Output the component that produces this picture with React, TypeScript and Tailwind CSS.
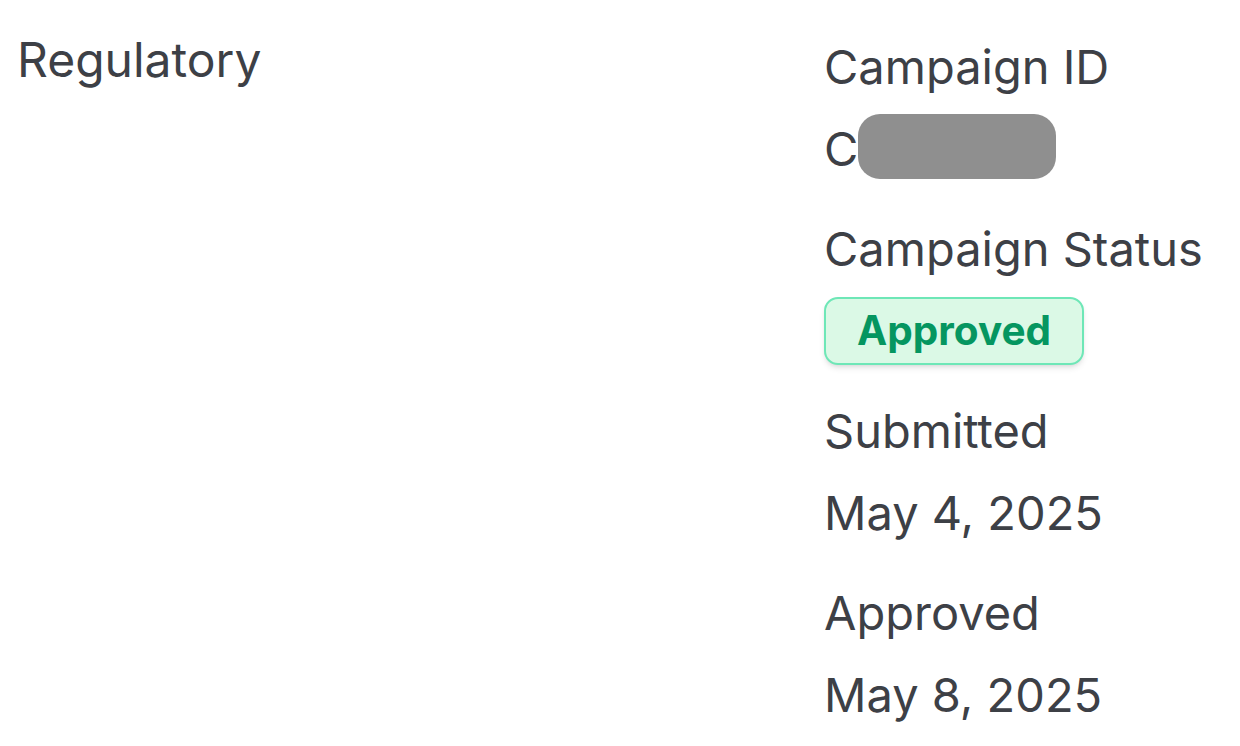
import React from "react";

const Field = ({ label, children }: { label: string; children: React.ReactNode }) => (
  <div className="flex flex-col">
    <div className="leading-[82px]">{label}</div>
    <div className="leading-[82px]">{children}</div>
  </div>
);

const App = () => {
  return (
    <div
      className="w-[1240px] h-[746px] bg-white text-[#3d4046] text-[47px] overflow-hidden"
      style={{ fontFamily: "Inter, 'Noto Sans', sans-serif" }}
    >
      <div className="grid grid-cols-[807px_1fr] pl-[17px]">
        <div className="leading-[82px] pt-[19px] text-[48px]">Regulatory</div>
        <div className="flex flex-col gap-[18px] pt-[26px]">
          <Field label="Campaign ID">
            <div className="flex items-center h-[82px]">
              <span>C</span>
              <span className="inline-block w-[198px] h-[65px] mb-[6px] rounded-[22px] bg-[#8f8f8f]" />
            </div>
          </Field>
          <div className="flex flex-col">
            <div className="leading-[82px]">Campaign Status</div>
            <div className="h-[82px] flex items-center">
              <span className="inline-block rounded-[14px] border-2 border-[#6ee7b7] bg-[#dbf9e6] px-[31px] text-[40.5px] leading-[64px] font-bold text-[#059660] shadow-md">
                Approved
              </span>
            </div>
          </div>
          <Field label="Submitted">May 4, 2025</Field>
          <Field label="Approved">May 8, 2025</Field>
        </div>
      </div>
    </div>
  );
};

export default App;
